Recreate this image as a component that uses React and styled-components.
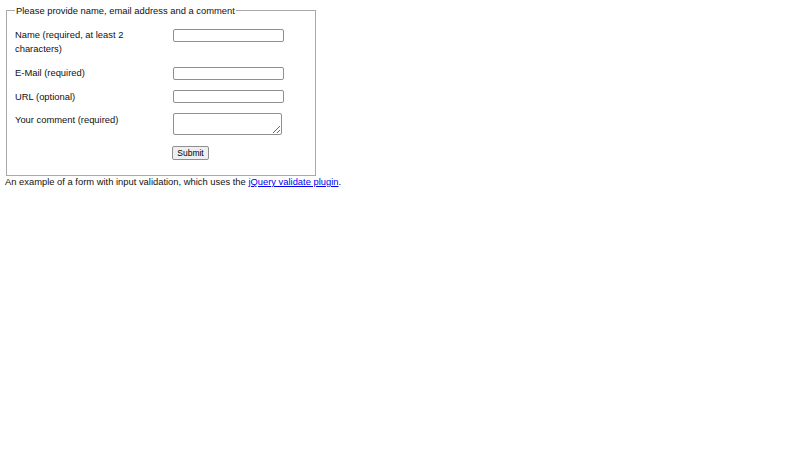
import React from 'react';
import styled, { createGlobalStyle } from 'styled-components';

const GlobalStyle = createGlobalStyle`
    body {
        margin: 0;
        padding: 0;
        background: #fff;
        color: #111;
        font-family: "Liberation Sans", Arial, sans-serif;
        font-size: 9.4px;
    }
`;

const Page = styled.div`
    padding: 4px 5px;
`;

const Fieldset = styled.fieldset`
    box-sizing: border-box;
    width: 310px;
    margin: 0 0 0 1px;
    padding: 11px 8px 15px 8px;
    border: 1px solid #a9a9a9;
`;

const Legend = styled.legend`
    padding: 0 1px;
    margin-left: 0;
    line-height: 13px;
    font-size: 9.4px;
`;

const FormGrid = styled.div`
    display: grid;
    grid-template-columns: 158px auto;
    row-gap: 10px;
    align-items: start;
`;

const Label = styled.label`
    line-height: 14px;
    padding-right: 10px;
    margin-top: ${p => (p.$tight ? -1 : 0)}px;
`;

const TextInput = styled.input`
    box-sizing: border-box;
    width: 111px;
    height: 13px;
    margin: ${p => p.$offset || 0}px 0 0 0;
    padding: 0 2px;
    border: 1px solid #8f8f8f;
    border-radius: 2px;
    font: 9px "Liberation Sans", Arial, sans-serif;
`;

const TextArea = styled.textarea`
    box-sizing: border-box;
    width: 109px;
    height: 22px;
    margin: -1px 0 0 0;
    padding: 1px 2px;
    border: 1px solid #8f8f8f;
    border-radius: 2px;
    font: 9px "Liberation Sans", Arial, sans-serif;
`;

const SubmitButton = styled.button`
    box-sizing: border-box;
    grid-column: 2;
    justify-self: start;
    margin: 1px 0 0 -1px;
    width: 37px;
    height: 14px;
    padding: 0;
    border: 1px solid #8f8f8f;
    border-radius: 2px;
    background: #efefef;
    color: #000;
    font: 8.5px "Liberation Sans", Arial, sans-serif;
    line-height: 12px;
`;

const Note = styled.p`
    margin: 0;
    line-height: 11px;
`;

const Link = styled.a`
    color: #0000ee;
    text-decoration: underline;
`;

const fields = [
    { id: 'cname', label: 'Name (required, at least 2 characters)', offset: 1 },
    { id: 'cemail', label: 'E-Mail (required)', offset: 1 },
    { id: 'curl', label: 'URL (optional)', offset: 0 },
];

export default function App() {
    return (
        <Page>
            <GlobalStyle />
            <form onSubmit={e => e.preventDefault()}>
                <Fieldset>
                    <Legend>Please provide name, email address and a comment</Legend>
                    <FormGrid>
                        {fields.map(f => (
                            <React.Fragment key={f.id}>
                                <Label htmlFor={f.id}>{f.label}</Label>
                                <TextInput id={f.id} type="text" $offset={f.offset} />
                            </React.Fragment>
                        ))}
                        <Label htmlFor="ccomment" $tight>Your comment (required)</Label>
                        <TextArea id="ccomment" />
                        <SubmitButton type="submit">Submit</SubmitButton>
                    </FormGrid>
                </Fieldset>
            </form>
            <Note>
                An example of a form with input validation, which uses the{' '}
                <Link href="#">jQuery validate plugin</Link>.
            </Note>
        </Page>
    );
}
